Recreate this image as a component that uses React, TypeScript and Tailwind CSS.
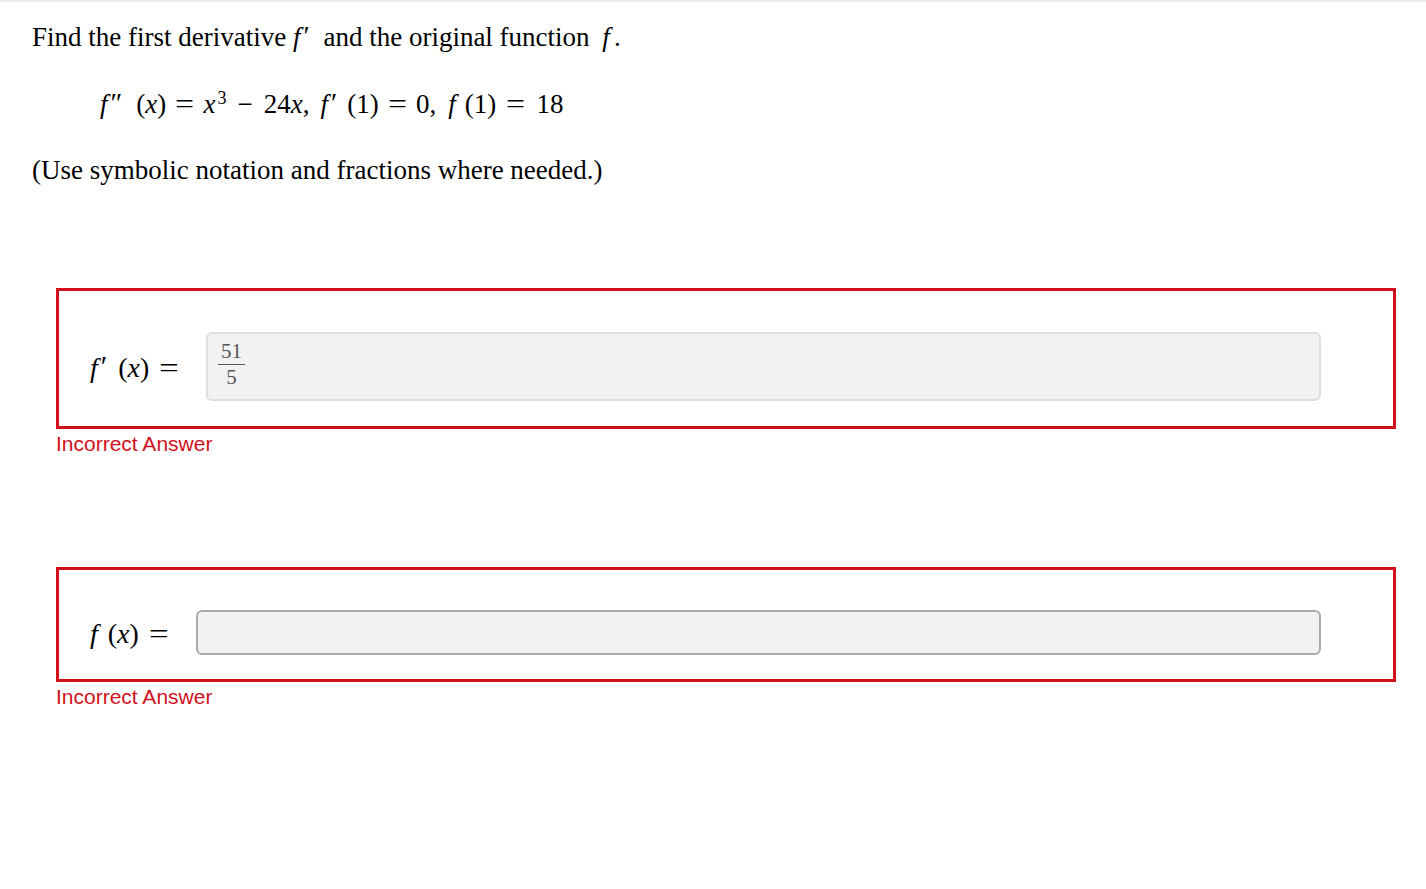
const serif = "font-['Liberation_Serif','Times_New_Roman',serif]";

const Prime = ({ n = 1, className = "" }: { n?: number; className?: string }) => (
  <span className={`inline-block not-italic text-[1.05em] ml-[3px] -translate-y-[1px] ${className}`}>
    {n === 2 ? "″" : "′"}
  </span>
);

// MathJax's equals sign is wider than the text font's
const Eq = ({ className = "mx-[11px]" }: { className?: string }) => (
  <span className={`inline-block scale-x-[1.25] ${className}`}>=</span>
);
const Minus = () => <span className="inline-block mx-[11px]">−</span>;

const AnswerBox = ({
  label,
  children,
  inputClass,
  padClass,
}: {
  label: React.ReactNode;
  children?: React.ReactNode;
  inputClass: string;
  padClass: string;
}) => (
  <div>
    <div className={`flex items-center border-[3px] border-[#d0111c] pl-[31px] pr-[72px] ${padClass}`}>
      <div className={`${serif} text-[28px] leading-[30px] text-black whitespace-nowrap pt-[2px]`}>{label}</div>
      <div className={`flex-1 flex items-center rounded-[6px] bg-[#f2f2f2] ${inputClass}`}>{children}</div>
    </div>
    <div className="font-['Liberation_Sans',Arial,sans-serif] text-[21px] text-[#d0111c] mt-[2px] leading-[26px]">
      Incorrect Answer
    </div>
  </div>
);

export default function App() {
  return (
    <div className="min-h-screen bg-white border-t-2 border-[#ececec]">
      <div className={`${serif} text-black pl-[32px] pr-[30px] pt-[18px]`}>
        <p className="text-[27px] leading-[34px]">
          Find the first derivative <i>f</i>
          <Prime className="mr-[7px]" /> and the original function <i className="ml-[6px]">f</i>
          <span className="ml-[4px]">.</span>
        </p>
        <p className="text-[27px] leading-[34px] mt-[33px] pl-[68px] whitespace-nowrap">
          <i>f</i>
          <Prime n={2} />
          <span className="ml-[14px]">(</span>
          <i>x</i>)
          <Eq />
          <i>x</i>
          <sup className="text-[18px] ml-[2px]">3</sup>
          <Minus />
          24<i>x</i>,<span className="ml-[11px]" />
          <i>f</i>
          <Prime />
          <span className="ml-[10px]">(1)</span>
          <Eq />
          0,<span className="ml-[12px]" />
          <i>f</i>
          <span className="ml-[9px]">(1)</span>
          <Eq className="ml-[12px] mr-[13px]" />
          18
        </p>
        <p className="text-[27px] leading-[34px] mt-[32px]">
          (Use symbolic notation and fractions where needed.)
        </p>
      </div>

      <div className="pl-[56px] pr-[30px] mt-[101px]">
        <AnswerBox
          padClass="pt-[41px] pb-[25px]"
          inputClass="ml-[26px] h-[69px] border-2 border-[#dedede] pl-[10px]"
          label={
            <>
              <i>f</i>
              <Prime />
              <span className="ml-[11px]">(</span>
              <i>x</i>)
              <Eq className="scale-x-[1.4] ml-[12px] mr-[3px]" />
            </>
          }
        >
          <div className={`${serif} flex flex-col items-center text-[21px] leading-[21px] text-[#555] pb-[4px]`}>
            <span className="px-[3px]">51</span>
            <span className="w-full border-t border-[#555] my-[2px]" />
            <span>5</span>
          </div>
        </AnswerBox>

        <div className="mt-[110px]">
          <AnswerBox
            padClass="pt-[40px] pb-[24px]"
            inputClass="ml-[26px] h-[45px] border-2 border-[#aaaaaa]"
            label={
              <>
                <i>f</i>
                <span className="ml-[10px]">(</span>
                <i>x</i>)
                <Eq className="scale-x-[1.4] ml-[12px] mr-[3px]" />
              </>
            }
          />
        </div>
      </div>
    </div>
  );
}
